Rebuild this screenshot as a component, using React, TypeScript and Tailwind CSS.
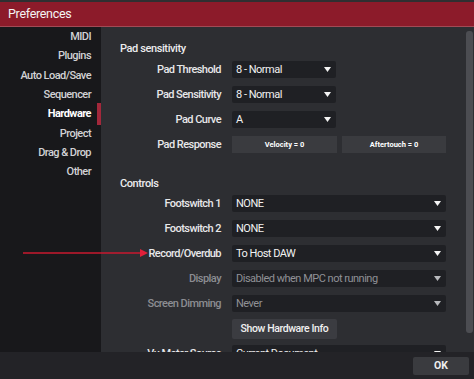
import React from "react";

const Tri = ({ dim }: { dim?: boolean }) => (
  <svg width="7" height="5" viewBox="0 0 7 5" className="shrink-0">
    <path d="M0 0H7L3.5 5Z" fill={dim ? "#b8b9bd" : "#f4f4f4"} />
  </svg>
);

const sideItems = ["MIDI", "Plugins", "Auto Load/Save", "Sequencer", "Hardware", "Project", "Drag & Drop", "Other"];

function Select({ value, wide, dim }: { value: string; wide?: boolean; dim?: boolean }) {
  return (
    <div
      className={`shrink-0 ml-[11px] h-[17px] ${wide ? "w-[214px]" : "w-[104px]"} bg-[#1f2024] rounded-[2px] flex items-center justify-between pl-[4px] pr-[5px]`}
    >
      <span
        className={`text-[11px] tracking-[-0.5px] leading-none ${dim ? "text-[#909196]" : "text-[#f2f2f2]"} whitespace-nowrap`}
      >
        {value}
      </span>
      <Tri dim={dim} />
    </div>
  );
}

function Row({ label, dim, children }: { label: string; dim?: boolean; children: React.ReactNode }) {
  return (
    <div className="shrink-0 flex items-center h-[17px]">
      <div
        className={`shrink-0 w-[101px] text-right text-[11px] tracking-[-0.55px] font-medium leading-none whitespace-nowrap ${dim ? "text-[#8c8d92]" : "text-[#e8e8ea]"}`}
      >
        {label}
      </div>
      {children}
    </div>
  );
}

export default function App() {
  return (
    <div
      className="relative w-[474px] h-[379px] flex flex-col bg-[#232327] overflow-hidden"
      style={{ fontFamily: "Roboto, 'Noto Sans', sans-serif" }}
    >
      <div className="shrink-0 h-[2px] bg-[#2f2f31]" />
      <div className="shrink-0 h-[25px] bg-[#8c1b2a] border-b border-[#a24a55] flex items-center pl-[8px]">
        <span className="text-[12.5px] tracking-[-0.3px] text-[#f4f4f4] leading-none">Preferences</span>
      </div>
      <div className="shrink-0 h-[325px] flex overflow-hidden">
        <div className="shrink-0 w-[101px] bg-[#18181b] flex flex-col">
          {sideItems.map((s) => {
            const sel = s === "Hardware";
            return (
              <div key={s} className="shrink-0 relative h-[19.3px] flex items-center justify-end pr-[10px]">
                <span
                  className={`text-[11px] tracking-[-0.55px] leading-none whitespace-nowrap ${sel ? "font-bold text-white" : "font-medium text-[#d2d2d5]"}`}
                >
                  {s}
                </span>
                {sel && <div className="absolute right-0 top-[-1.5px] w-[4px] h-[22px] bg-[#a3283b]" />}
              </div>
            );
          })}
        </div>
        <div className="relative flex-1 bg-[#2d2e32] pl-[19px] pt-[13px] flex flex-col overflow-hidden">
          <div className="shrink-0 h-[16px] flex items-center text-[11px] tracking-[-0.4px] font-medium text-[#ececee] leading-none">
            Pad sensitivity
          </div>
          <div className="shrink-0 mt-[5px] flex flex-col gap-[8px]">
            <Row label="Pad Threshold">
              <Select value="8 - Normal" />
            </Row>
            <Row label="Pad Sensitivity">
              <Select value="8 - Normal" />
            </Row>
            <Row label="Pad Curve">
              <Select value="A" />
            </Row>
            <Row label="Pad Response">
              <div className="shrink-0 ml-[11px] flex gap-[5px]">
                <div className="w-[105px] h-[17px] bg-[#3a3b3f] flex items-center justify-center text-[7.5px] font-bold text-white leading-none">
                  Velocity = 0
                </div>
                <div className="w-[104px] h-[17px] bg-[#3a3b3f] flex items-center justify-center text-[7.5px] font-bold text-white leading-none">
                  Aftertouch = 0
                </div>
              </div>
            </Row>
          </div>
          <div className="shrink-0 mt-[22px] h-[16px] flex items-center text-[11px] tracking-[-0.4px] font-medium text-[#ececee] leading-none">
            Controls
          </div>
          <div className="shrink-0 mt-[4px] flex flex-col gap-[8px]">
            <Row label="Footswitch 1">
              <Select value="NONE" wide />
            </Row>
            <Row label="Footswitch 2">
              <Select value="NONE" wide />
            </Row>
            <Row label="Record/Overdub">
              <Select value="To Host DAW" wide />
            </Row>
            <Row label="Display" dim>
              <Select value="Disabled when MPC not running" wide dim />
            </Row>
            <Row label="Screen Dimming" dim>
              <Select value="Never" wide dim />
            </Row>
          </div>
          <div className="shrink-0 mt-[7px] flex h-[20px]">
            <div className="ml-[112px] w-[105px] h-[20px] bg-[#3b3c41] rounded-[2px] flex items-center justify-center text-[10.5px] tracking-[-0.4px] font-medium text-[#f0f0f0] leading-none">
              Show Hardware Info
            </div>
          </div>
          <div className="shrink-0 mt-[6px]">
            <Row label="Vu Meter Source">
              <Select value="Current Document" wide />
            </Row>
          </div>
          <div className="absolute right-[1px] top-[4px] w-[7px] h-[302px] rounded-[3px] bg-[#4c4d52]" />
        </div>
      </div>
      <div className="flex-1 bg-[#232327] flex justify-end items-start pt-[5px] pr-[5px]">
        <div className="w-[56px] h-[18px] bg-[#3a3b3f] rounded-[2px] flex items-center justify-center text-[10.5px] font-bold text-[#eeeeee] leading-none">
          OK
        </div>
      </div>
      <svg className="absolute left-0 top-0 pointer-events-none" width="474" height="379">
        <line x1="23" y1="253" x2="141" y2="253" stroke="#c8182f" strokeWidth="1.3" />
        <path d="M140 249L148 253L140 257Z" fill="#e0203a" />
      </svg>
    </div>
  );
}
